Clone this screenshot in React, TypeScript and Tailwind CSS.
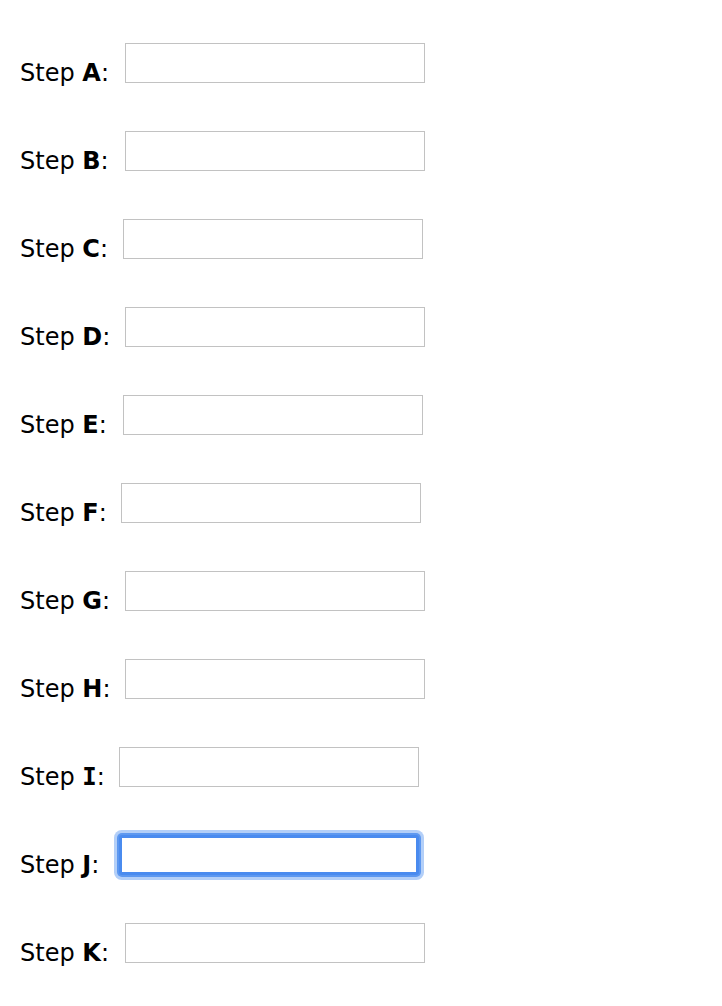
import React from "react";

type Row = { letter: string; x: number; focused?: boolean; mono?: boolean };

const rows: Row[] = [
  { letter: "A", x: 125 },
  { letter: "B", x: 125 },
  { letter: "C", x: 123 },
  { letter: "D", x: 125 },
  { letter: "E", x: 123 },
  { letter: "F", x: 121 },
  { letter: "G", x: 125 },
  { letter: "H", x: 125 },
  { letter: "I", x: 119, mono: true },
  { letter: "J", x: 119, focused: true },
  { letter: "K", x: 125 },
];

export default function App() {
  return (
    <div
      className="min-h-[1006px] w-[722px] bg-white pl-[20px] pt-[43px] text-black"
      style={{ fontFamily: '"DejaVu Sans", Verdana, sans-serif' }}
    >
      {rows.map((r) => (
        <div key={r.letter} className="mb-[48px] flex h-[40px] items-start">
          <label
            className="mt-[18px] shrink-0 text-[24px] leading-[24px] whitespace-nowrap"
            style={{ width: r.x - 20 }}
          >
            Step{" "}
            <b
              className="font-bold"
              style={r.mono ? { fontFamily: '"DejaVu Sans Mono", monospace' } : undefined}
            >
              {r.letter}
            </b>
            :
          </label>
          {r.focused ? (
            <input
              type="text"
              className="h-[40px] w-[300px] rounded-[3px] border-[3px] border-[#4a8bef] bg-white outline-none shadow-[0_0_0_2px_#5d98f0,0_0_0_5px_#b3cff8]"
            />
          ) : (
            <input
              type="text"
              className="h-[40px] w-[300px] border border-[#c2c2c2] bg-white outline-none"
            />
          )}
        </div>
      ))}
    </div>
  );
}
